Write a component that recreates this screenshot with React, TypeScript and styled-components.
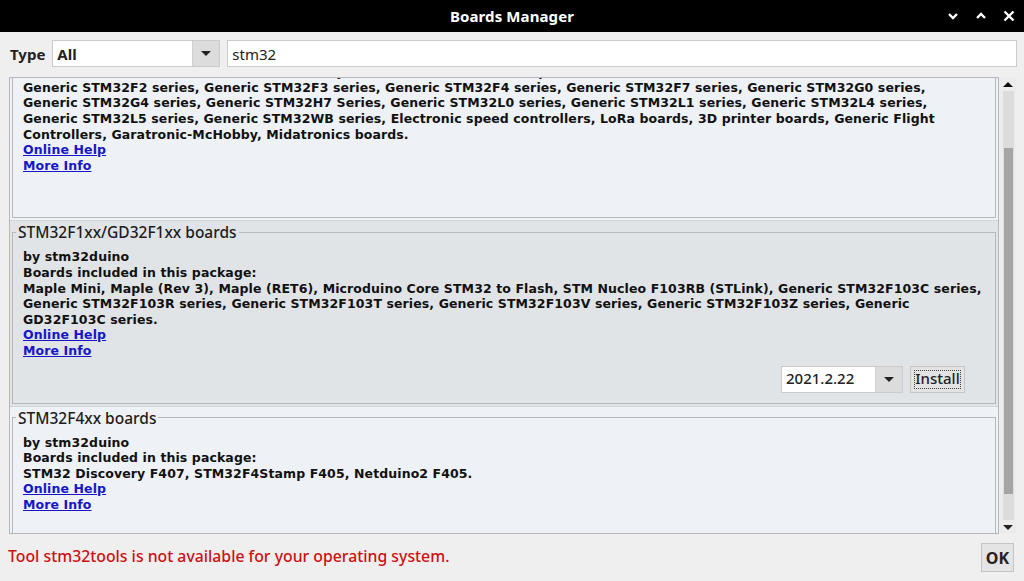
import React from 'react';
import styled, { createGlobalStyle } from 'styled-components';

const GlobalStyle = createGlobalStyle`
  html, body {
    margin: 0;
    padding: 0;
    background: #efefef;
  }
  #root {
    width: 1024px;
    height: 581px;
  }
`;

const Window = styled.div`
  width: 1024px;
  height: 581px;
  display: flex;
  flex-direction: column;
  background: #efefef;
  overflow: hidden;
  font-family: 'Noto Sans', 'Open Sans', sans-serif;
  color: #222;
`;

const TitleBar = styled.div`
  height: 32px;
  flex: none;
  background: #000;
  color: #fff;
  display: grid;
  grid-template-columns: 1fr auto 1fr;
  align-items: center;
`;

const Title = styled.div`
  grid-column: 2;
  font-size: 15px;
  font-weight: 700;
  letter-spacing: 0.1px;
`;

const WindowControls = styled.div`
  justify-self: end;
  display: flex;
  align-items: center;
  gap: 16px;
  padding-right: 9px;
`;

const ControlIcon = styled.svg`
  display: block;
  width: 12px;
  height: 12px;
`;

const Toolbar = styled.div`
  display: flex;
  align-items: center;
  gap: 7px;
  height: 27px;
  margin-top: 8px;
  padding: 0 7px 0 10px;
  flex: none;
`;

const ToolLabel = styled.span`
  font-size: 15px;
  font-weight: 700;
  color: #222;
`;

const Combo = styled.div<{ $width: number }>`
  display: flex;
  width: ${(p) => p.$width}px;
  height: 27px;
  box-sizing: border-box;
  border: 1px solid #cbcbcb;
  background: #fff;
  flex: none;
`;

const ComboValue = styled.div<{ $weight: number }>`
  flex: 1;
  display: flex;
  align-items: center;
  padding-left: 4px;
  font-family: 'Noto Sans', sans-serif;
  font-size: 15px;
  font-weight: ${(p) => p.$weight};
  letter-spacing: 0;
  color: #222;
`;

const ComboButton = styled.div`
  width: 26px;
  display: flex;
  align-items: center;
  justify-content: center;
  background: #dcdcdc;
  border-left: 1px solid #d0d0d0;
`;

const DownTriangle = styled.span`
  width: 0;
  height: 0;
  border-left: 5px solid transparent;
  border-right: 5px solid transparent;
  border-top: 5px solid #222;
`;

const UpTriangle = styled.span`
  width: 0;
  height: 0;
  border-left: 5px solid transparent;
  border-right: 5px solid transparent;
  border-bottom: 5px solid #111;
`;

const SearchField = styled.div`
  flex: 1;
  height: 27px;
  box-sizing: border-box;
  border: 1px solid #cbcbcb;
  background: #fff;
  display: flex;
  align-items: center;
  padding-left: 4px;
  font-size: 15px;
  color: #222;
`;

const ListArea = styled.div`
  display: flex;
  height: 457px;
  margin-top: 10px;
  padding: 0 8px 0 9px;
  flex: none;
`;

const Viewport = styled.div`
  flex: 1;
  border: 1px solid #b8b8b8;
  overflow: hidden;
  background: #eef1f5;
`;

const Scroller = styled.div<{ $offset: number }>`
  margin-top: -${(p) => p.$offset}px;
`;

const Cell = styled.div<{ $tone: 'light' | 'dark' }>`
  background: ${(p) => (p.$tone === 'dark' ? '#e1e4e7' : '#eef1f5')};
  padding: 1px 2px 2px;
  border-bottom: 1px solid #d2d5d9;
`;

const Frame = styled.fieldset`
  margin: 0;
  min-width: 0;
  padding: 0 3px 10px;
  border: 1px solid #b5b8bc;
`;

const Legend = styled.legend`
  padding: 0 2px;
  font-family: 'Noto Sans', sans-serif;
  font-size: 15.5px;
  font-weight: 500;
  line-height: 20px;
  color: #1d1d1d;
`;

const Body = styled.div`
  padding: 7px 7px 0;
  font-family: 'DejaVu Sans', sans-serif;
  font-weight: 700;
  font-size: 12.5px;
  letter-spacing: 0.1px;
  line-height: 15.6px;
  color: #111;
`;

const Line = styled.div`
  white-space: nowrap;
`;

const Link = styled.a`
  display: block;
  width: max-content;
  color: #1616c9;
  text-decoration: underline;
`;

const ActionRow = styled.div`
  margin-top: 7px;
  height: 27px;
  display: flex;
  justify-content: flex-end;
  gap: 7px;
  padding-right: 20px;
`;

const InstallButton = styled.div`
  width: 55px;
  height: 27px;
  box-sizing: border-box;
  border: 1px solid #c6c6c6;
  background: #e3e3e3;
  padding: 3px;
  display: flex;
`;

const FocusRing = styled.div`
  flex: 1;
  border: 1px dotted #444;
  display: flex;
  align-items: center;
  justify-content: center;
  font-family: 'Noto Sans', sans-serif;
  font-size: 15px;
  font-weight: 500;
  letter-spacing: 0;
  color: #222;
`;

const ScrollBar = styled.div`
  width: 16px;
  margin-left: 1px;
  background: #ececec;
  display: flex;
  flex-direction: column;
  align-items: center;
`;

const ScrollArrow = styled.div`
  height: 14px;
  flex: none;
  display: flex;
  align-items: center;
  justify-content: center;
`;

const ScrollTrack = styled.div`
  flex: 1;
  width: 11px;
  background: #dcdcdc;
  display: flex;
  justify-content: center;
`;

const Thumb = styled.div<{ $top: number; $height: number }>`
  width: 9px;
  margin-top: ${(p) => p.$top}px;
  height: ${(p) => p.$height}px;
  background: #a5a5a5;
`;

const Footer = styled.div`
  flex: 1;
  display: flex;
  align-items: center;
  justify-content: space-between;
  padding: 0 10px 0 8px;
`;

const ErrorText = styled.div`
  font-size: 15.8px;
  font-weight: 500;
  color: #cc1010;
  margin-bottom: 4px;
`;

const OkButton = styled.div`
  width: 33px;
  height: 29px;
  box-sizing: border-box;
  border: 1px solid #c4c4c4;
  background: #e4e4e4;
  display: flex;
  align-items: center;
  justify-content: center;
  font-size: 16px;
  font-weight: 700;
  color: #222;
`;

type Board = {
  title: string;
  author: string;
  lines: string[];
  tone: 'light' | 'dark';
  actions?: boolean;
};

const boards: Board[] = [
  {
    title: 'STM32 MCU based boards',
    author: 'STMicroelectronics',
    tone: 'light',
    lines: [
      'Nucleo-144, Nucleo-64, Nucleo-32, Discovery, Eval, STM32MP1 series coprocessor, Generic STM32F0 series, Generic STM32F1 series,',
      'Generic STM32F2 series, Generic STM32F3 series, Generic STM32F4 series, Generic STM32F7 series, Generic STM32G0 series,',
      'Generic STM32G4 series, Generic STM32H7 Series, Generic STM32L0 series, Generic STM32L1 series, Generic STM32L4 series,',
      'Generic STM32L5 series, Generic STM32WB series, Electronic speed controllers, LoRa boards, 3D printer boards, Generic Flight',
      'Controllers, Garatronic-McHobby, Midatronics boards.',
    ],
  },
  {
    title: 'STM32F1xx/GD32F1xx boards',
    author: 'stm32duino',
    tone: 'dark',
    actions: true,
    lines: [
      'Maple Mini, Maple (Rev 3), Maple (RET6), Microduino Core STM32 to Flash, STM Nucleo F103RB (STLink), Generic STM32F103C series,',
      'Generic STM32F103R series, Generic STM32F103T series, Generic STM32F103V series, Generic STM32F103Z series, Generic',
      'GD32F103C series.',
    ],
  },
  {
    title: 'STM32F4xx boards',
    author: 'stm32duino',
    tone: 'light',
    lines: ['STM32 Discovery F407, STM32F4Stamp F405, Netduino2 F405.'],
  },
];

function BoardCard({ board }: { board: Board }) {
  return (
    <Cell $tone={board.tone}>
      <Frame>
        <Legend>{board.title}</Legend>
        <Body>
          <Line>by {board.author}</Line>
          <Line>Boards included in this package:</Line>
          {board.lines.map((l) => (
            <Line key={l}>{l}</Line>
          ))}
          <Link>Online Help</Link>
          <Link>More Info</Link>
          <ActionRow>
            {board.actions && (
              <>
                <Combo $width={122}>
                  <ComboValue $weight={500}>2021.2.22</ComboValue>
                  <ComboButton>
                    <DownTriangle />
                  </ComboButton>
                </Combo>
                <InstallButton>
                  <FocusRing>Install</FocusRing>
                </InstallButton>
              </>
            )}
          </ActionRow>
        </Body>
      </Frame>
    </Cell>
  );
}

export default function App() {
  return (
    <>
      <GlobalStyle />
      <Window>
        <TitleBar>
          <Title>Boards Manager</Title>
          <WindowControls>
            <ControlIcon viewBox="0 0 12 12">
              <polyline points="2,4 6,8 10,4" fill="none" stroke="#fff" strokeWidth="2.4" />
            </ControlIcon>
            <ControlIcon viewBox="0 0 12 12">
              <polyline points="2,8 6,4 10,8" fill="none" stroke="#fff" strokeWidth="2.4" />
            </ControlIcon>
            <ControlIcon viewBox="0 0 12 12">
              <path d="M1.5 1.5 L10.5 10.5 M10.5 1.5 L1.5 10.5" stroke="#fff" strokeWidth="2.4" />
            </ControlIcon>
          </WindowControls>
        </TitleBar>

        <Toolbar>
          <ToolLabel>Type</ToolLabel>
          <Combo $width={168}>
            <ComboValue $weight={700}>All</ComboValue>
            <ComboButton>
              <DownTriangle />
            </ComboButton>
          </Combo>
          <SearchField>stm32</SearchField>
        </Toolbar>

        <ListArea>
          <Viewport>
            <Scroller $offset={73}>
              {boards.map((b) => (
                <BoardCard key={b.title} board={b} />
              ))}
            </Scroller>
          </Viewport>
          <ScrollBar>
            <ScrollArrow>
              <UpTriangle />
            </ScrollArrow>
            <ScrollTrack>
              <Thumb $top={57} $height={346} />
            </ScrollTrack>
            <ScrollArrow>
              <DownTriangle />
            </ScrollArrow>
          </ScrollBar>
        </ListArea>

        <Footer>
          <ErrorText>Tool stm32tools is not available for your operating system.</ErrorText>
          <OkButton>OK</OkButton>
        </Footer>
      </Window>
    </>
  );
}
